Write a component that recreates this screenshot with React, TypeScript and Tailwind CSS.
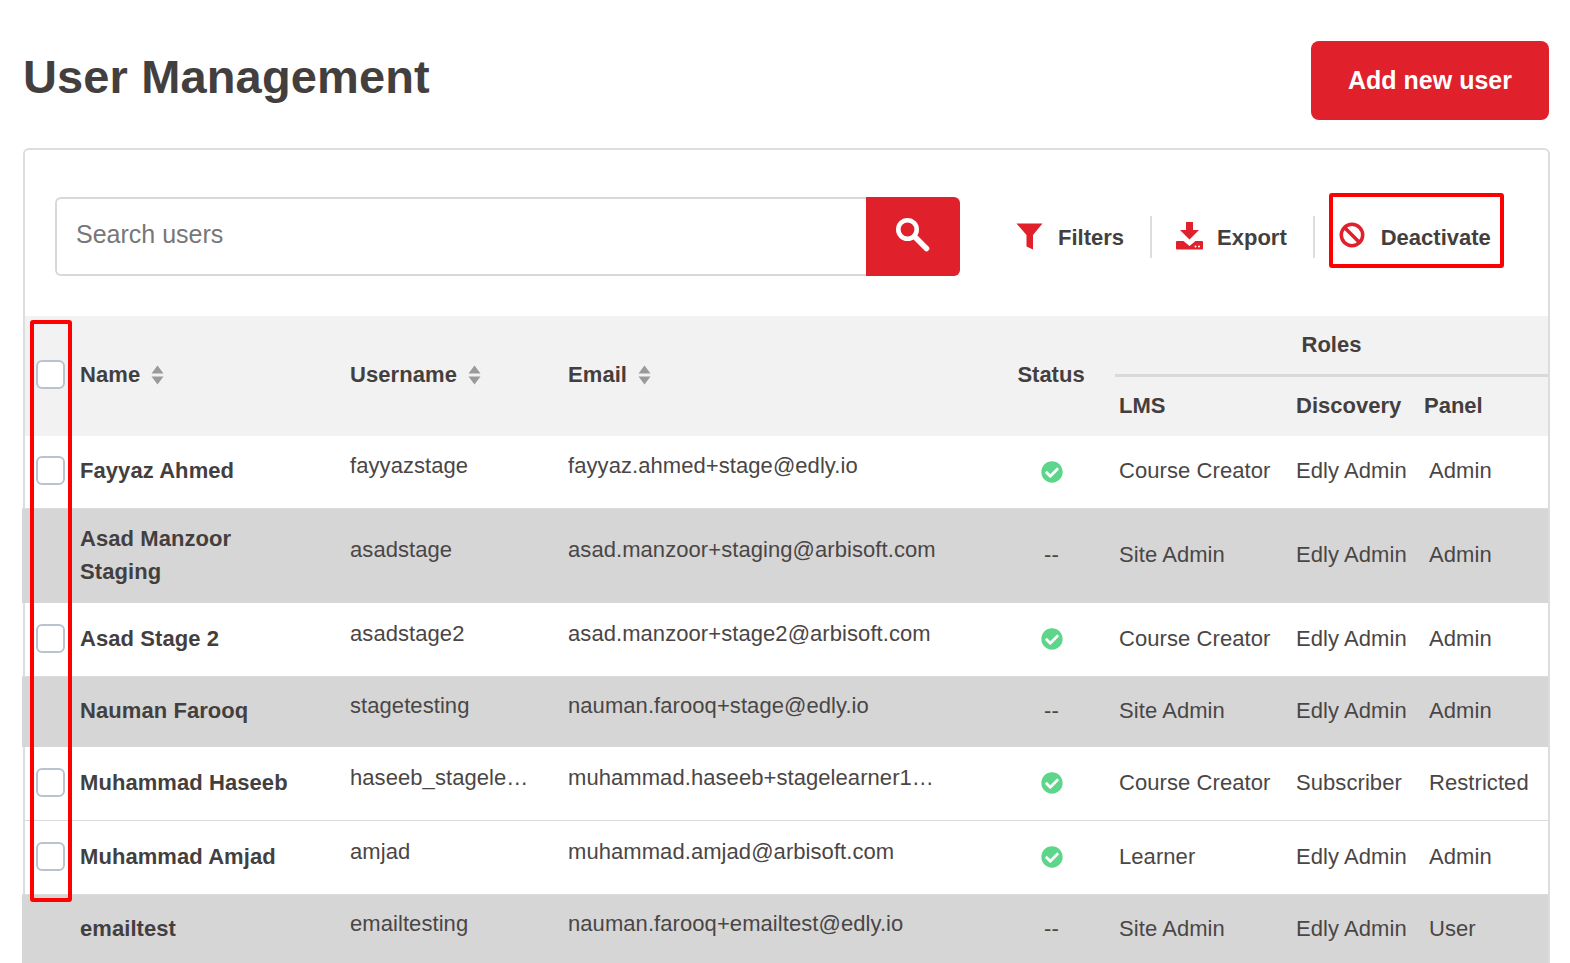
import React from "react";
import { FaCheckCircle } from "react-icons/fa";

const cols = "grid grid-cols-[55px_270px_218px_433px_100px_195px_128px_124px]";

type Row = { name: string[]; user: string; email: string; active: boolean; lms: string; disc: string; panel: string; h: string; };

const rows: Row[] = [
  { name: ["Fayyaz Ahmed"], user: "fayyazstage", email: "fayyaz.ahmed+stage@edly.io", active: true, lms: "Course Creator", disc: "Edly Admin", panel: "Admin", h: "h-[72px]" },
  { name: ["Asad Manzoor", "Staging"], user: "asadstage", email: "asad.manzoor+staging@arbisoft.com", active: false, lms: "Site Admin", disc: "Edly Admin", panel: "Admin", h: "h-[95px]" },
  { name: ["Asad Stage 2"], user: "asadstage2", email: "asad.manzoor+stage2@arbisoft.com", active: true, lms: "Course Creator", disc: "Edly Admin", panel: "Admin", h: "h-[73px]" },
  { name: ["Nauman Farooq"], user: "stagetesting", email: "nauman.farooq+stage@edly.io", active: false, lms: "Site Admin", disc: "Edly Admin", panel: "Admin", h: "h-[71px]" },
  { name: ["Muhammad Haseeb"], user: "haseeb_stagele…", email: "muhammad.haseeb+stagelearner1…", active: true, lms: "Course Creator", disc: "Subscriber", panel: "Restricted", h: "h-[73px]" },
  { name: ["Muhammad Amjad"], user: "amjad", email: "muhammad.amjad@arbisoft.com", active: true, lms: "Learner", disc: "Edly Admin", panel: "Admin", h: "h-[74px] border-t border-[#dcdcdc]" },
  { name: ["emailtest"], user: "emailtesting", email: "nauman.farooq+emailtest@edly.io", active: false, lms: "Site Admin", disc: "Edly Admin", panel: "User", h: "h-[70px]" },
];

function Sort() {
  return (
    <svg width="13" height="20" viewBox="0 0 13 20" className="ml-[11px] mt-[2px]">
      <path d="M6.5 0.5 L12.5 8.5 H0.5 Z M0.5 11.5 H12.5 L6.5 19.5 Z" fill="#9a9a9a" />
    </svg>
  );
}

function Box() {
  return <div className="w-[29px] h-[29px] rounded-[6px] border-2 border-[#b9c3cf] bg-white ml-[11px]" />;
}

function Th({ children, sort }: { children: React.ReactNode; sort?: boolean }) {
  return (
    <div className="flex items-center pb-[4px] text-[22px] font-bold text-[#443f3f] tracking-[0.07px]">
      {children}
      {sort && <Sort />}
    </div>
  );
}

export default function App() {
  return (
    <div className="h-[963px] w-[1570px] overflow-hidden bg-white text-[#4a4646] font-['Liberation_Sans',Arial,sans-serif]">
      <div className="flex items-start justify-between pl-[23px] pr-[21px] pt-[41px] h-[148px]">
        <h1 className="text-[47px] leading-[72px] font-bold text-[#443f3f] tracking-[0.13px]">User Management</h1>
        <button className="w-[238px] h-[79px] rounded-[8px] bg-[#e0202a] text-white text-[25px] font-bold">Add new user</button>
      </div>

      <div className="relative mx-[23px] w-[1527px] h-[815px] border-2 border-b-0 border-[#dddddd] rounded-t-[6px]">
        <div className="flex items-start pt-[47px] pl-[30px] h-[166px]">
          <div className="flex w-[905px] h-[79px]">
            <div className="flex-1 flex items-center pl-[19px] pb-[3px] border-2 border-r-0 border-[#d8d8d8] rounded-l-[6px] text-[25px] text-[#777777]">
              Search users
            </div>
            <div className="w-[94px] flex items-center justify-center bg-[#e0202a] rounded-r-[6px]">
              <svg width="34" height="34" viewBox="0 0 34 34" fill="none" stroke="#ffffff" className="mb-[3px]">
                <circle cx="11.5" cy="11.5" r="9.2" strokeWidth="4.6" />
                <path d="M18.5 18.5 L30.5 30.5" strokeWidth="5.5" strokeLinecap="round" />
              </svg>
            </div>
          </div>

          <div className="flex items-center h-[79px] text-[22px] font-bold text-[#443f3f]">
            <svg width="27" height="27" viewBox="0 0 27 27" className="ml-[56px] mb-[1px]">
              <path d="M0.5 0.5 H26.5 L17 12 V26.5 L10.5 23.5 V12 Z" fill="#e0202a" />
            </svg>
            <span className="ml-[15px] mt-[2px]">Filters</span>
            <div className="w-[2px] h-[42px] bg-[#dddddd] ml-[26px]" />
            <svg width="27" height="28" viewBox="0 0 27 28" className="ml-[24px] mb-[1px]">
              <path d="M10 0 H17 V8 H23 L13.5 17.5 L4 8 H10 Z" fill="#e0202a" />
              <path d="M1 19 H7.5 L13.5 24 L19.5 19 H26 Q27 19 27 20 V26.5 Q27 27.5 26 27.5 H1 Q0 27.5 0 26.5 V20 Q0 19 1 19 Z" fill="#e0202a" />
              <circle cx="19.5" cy="24.5" r="1" fill="#ffffff" />
              <circle cx="23" cy="24.5" r="1" fill="#ffffff" />
            </svg>
            <span className="ml-[14px] mt-[2px]">Export</span>
            <div className="w-[2px] h-[42px] bg-[#dddddd] ml-[26px]" />
            <svg width="26" height="26" viewBox="0 0 26 26" fill="none" stroke="#e0202a" strokeWidth="3.5" className="ml-[24px] mb-[3px]">
              <circle cx="13" cy="13" r="10.7" />
              <path d="M5.5 5.5 L20.5 20.5" />
            </svg>
            <span className="ml-[16px] mt-[2px]">Deactivate</span>
          </div>
        </div>

        <div className={`${cols} h-[120px] bg-[#f2f2f2]`}>
          <div className="flex items-center mt-[-4px]"><Box /></div>
          <Th sort>Name</Th>
          <Th sort>Username</Th>
          <Th sort>Email</Th>
          <div className="flex items-center justify-center text-[22px] font-bold text-[#443f3f] mt-[-4px]">Status</div>
          <div className="col-span-3 ml-[14px] text-[22px] font-bold text-[#443f3f]">
            <div className="h-[61px] pb-[1px] flex items-center justify-center border-b-[3px] border-[#d9d9d9]">Roles</div>
            <div className="grid grid-cols-[181px_128px_124px] h-[59px] pb-[2px] items-center">
              <div className="pl-[4px]">LMS</div>
              <div>Discovery</div>
              <div>Panel</div>
            </div>
          </div>
        </div>

        {rows.map((r) => (
          <div key={r.user} className={`${cols} ${r.h} pb-[3px] items-center text-[22px] tracking-[0.07px] ${r.active ? "bg-white" : "bg-[#d6d6d6] ml-[-3px] pl-[3px] border-t border-[#dcdcdc]"}`}>
            <div className="flex items-center">{r.active && <Box />}</div>
            <div className="font-bold text-[#443f3f] leading-[33px]">
              {r.name.map((n) => <div key={n}>{n}</div>)}
            </div>
            <div className="pb-[10px]">{r.user}</div>
            <div className="pb-[10px]">{r.email}</div>
            <div className="flex justify-center pl-[1px]">
              {r.active ? <FaCheckCircle className="text-[#5dd58a] text-[22px] mt-[2px]" /> : <span>--</span>}
            </div>
            <div className="pl-[18px]">{r.lms}</div>
            <div>{r.disc}</div>
            <div className="pl-[5px]">{r.panel}</div>
          </div>
        ))}

        <div className="absolute left-[5px] top-[170px] w-[42px] h-[582px] border-[4px] border-[#ff0000] rounded-[3px] pointer-events-none" />
        <div className="absolute left-[1304px] top-[43px] w-[175px] h-[75px] border-[4px] border-[#ff0000] rounded-[3px] pointer-events-none" />
      </div>
    </div>
  );
}
